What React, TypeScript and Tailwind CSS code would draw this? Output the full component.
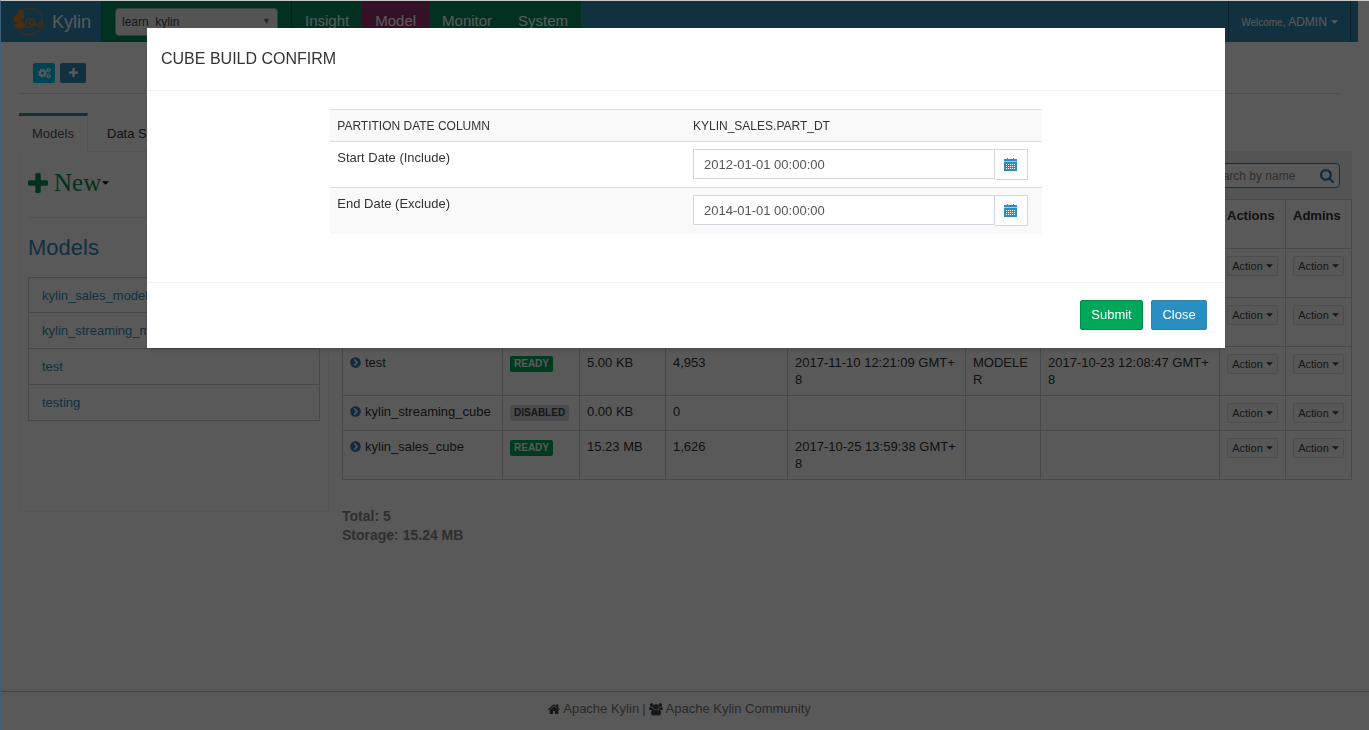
import type { ReactNode } from 'react';
import { FaChevronCircleRight } from 'react-icons/fa';

interface Cube {
  name: string;
  status: 'READY' | 'DISABLED' | '';
  size: string;
  records: string;
  lastBuild: string;
  owner: string;
  created: string;
}

const BLANK: Cube = { name: '', status: '', size: '', records: '', lastBuild: '', owner: '', created: '' };

const CUBES: Cube[] = [
  BLANK,
  BLANK,
  { name: 'test', status: 'READY', size: '5.00 KB', records: '4,953', lastBuild: '2017-11-10 12:21:09 GMT+8', owner: 'MODELER', created: '2017-10-23 12:08:47 GMT+8' },
  { name: 'kylin_streaming_cube', status: 'DISABLED', size: '0.00 KB', records: '0', lastBuild: '', owner: '', created: '' },
  { name: 'kylin_sales_cube', status: 'READY', size: '15.23 MB', records: '1,626', lastBuild: '2017-10-25 13:59:38 GMT+8', owner: '', created: '' },
];

const MODELS = ['kylin_sales_model', 'kylin_streaming_model', 'test', 'testing'];

const NAV = [
  { label: 'Insight', cls: 'bg-[#068c62]' },
  { label: 'Model', cls: 'bg-[#983270]' },
  { label: 'Monitor', cls: 'bg-[#068c62]' },
  { label: 'System', cls: 'bg-[#068c62]' },
];

const Caret = () => (
  <svg className="inline-block h-1 w-[7px] align-middle" viewBox="0 0 8 4" fill="currentColor" aria-hidden="true">
    <path d="M0 0h8L4 4z" />
  </svg>
);

const PlusIcon = ({ className }: { className: string }) => (
  <svg className={className} viewBox="192 128 1408 1408" fill="currentColor" aria-hidden="true">
    <path d="M1600 736v192q0 40-28 68t-68 28h-416v416q0 40-28 68t-68 28h-192q-40 0-68-28t-28-68v-416h-416q-40 0-68-28t-28-68v-192q0-40 28-68t68-28h416v-416q0-40 28-68t68-28h192q40 0 68 28t28 68v416h416q40 0 68 28t28 68z" />
  </svg>
);

const CogsIcon = () => (
  <svg className="h-3 w-[13px]" viewBox="0 0 26 24" fill="none" stroke="currentColor" aria-hidden="true">
    <circle cx="9" cy="12" r="5" strokeWidth="4" />
    <circle cx="9" cy="12" r="8" strokeWidth="2.5" strokeDasharray="3.2 3.08" />
    <circle cx="21" cy="6" r="2.6" strokeWidth="2.2" />
    <circle cx="21" cy="6" r="4.2" strokeWidth="1.6" strokeDasharray="2.2 2.2" />
    <circle cx="21" cy="18" r="2.6" strokeWidth="2.2" />
    <circle cx="21" cy="18" r="4.2" strokeWidth="1.6" strokeDasharray="2.2 2.2" />
  </svg>
);

const SearchIcon = () => (
  <svg className="size-[14px] shrink-0 text-[#337ab7]" viewBox="64 128 1664 1664" fill="currentColor" aria-hidden="true">
    <path d="M1216 832q0-185-131.5-316.5t-316.5-131.5-316.5 131.5-131.5 316.5 131.5 316.5 316.5 131.5 316.5-131.5 131.5-316.5zm512 832q0 52-38 90t-90 38q-54 0-90-38l-343-342q-179 124-399 124-143 0-273.5-55.5t-225-150-150-225-55.5-273.5 55.5-273.5 150-225 225-150 273.5-55.5 273.5 55.5 225 150 150 225 55.5 273.5q0 220-124 399l343 343q37 37 37 90z" />
  </svg>
);

const HomeIcon = () => (
  <svg className="size-3 text-[#444]" viewBox="96 128 1600 1500" fill="currentColor" aria-hidden="true">
    <path d="M1472 992v480q0 26-19 45t-45 19h-384v-384h-256v384h-384q-26 0-45-19t-19-45v-480q0-1 .5-3t.5-3l575-474 575 474q1 2 1 6zm223-69l-62 74q-8 9-21 11h-3q-13 0-21-7l-692-577-692 577q-12 8-24 7-13-2-21-11l-62-74q-8-10-7-23.5t11-21.5l719-599q32-26 76-26t76 26l244 204v-195q0-14 9-23t23-9h192q14 0 23 9t9 23v408l219 182q10 8 11 21.5t-7 23.5z" />
  </svg>
);

const UsersIcon = () => (
  <svg className="h-[13px] w-[14px] text-[#444]" viewBox="0 0 28 26" fill="currentColor" aria-hidden="true">
    <circle cx="5.5" cy="4" r="3.8" />
    <circle cx="22.5" cy="4" r="3.8" />
    <circle cx="14" cy="8" r="5.6" />
    <path d="M0 12q0-4 2-4 4 2 6 1 0 4 2 5H3q-3 0-3-2zM28 12q0-4-2-4-4 2-6 1 0 4-2 5h7q3 0 3-2zM4 21q0-8 5-8 5 3 10 0 5 0 5 8 0 4-4 4H8q-4 0-4-4z" />
  </svg>
);

const CalendarIcon = () => (
  <svg className="size-[13px]" viewBox="0 0 13 13" fill="currentColor" aria-hidden="true">
    <path d="M3 0h1v1h5V0h1v1h3v2H0V1h3z" />
    <path d="M0 3h13v1H0z" opacity=".45" />
    <path d="M0 4h13v9H0z" />
    <path d="M2 6.5h9M2 8.5h9M2 10.5h9" stroke="#fff" strokeWidth="1" strokeDasharray="1 1" />
  </svg>
);

const Logo = () => (
  <svg className="h-8 w-8" viewBox="0 0 32 32" fill="none" stroke="#d9802c" strokeLinecap="round" aria-hidden="true">
    <path d="M9 5C15 0 25 2 28 9c1 2 1 4 1 6" strokeWidth="1" />
    <path d="M5 23c4 7 15 8 21 1" strokeWidth="1" />
    <path d="M5 8l1-2 1-3 2 2 2 2-1 3 1 2-3 1 2 4 2 2-2 2-1 2-2-2-3 2 0-2-3-1 3-2 1-2-2-1-2 1 1-3-1-2z" fill="#d9802c" strokeWidth="1" />
    <path d="M12 21c1-2 0-4 1-6 2-3 7-3 8 0 1 4-4 5-5 2 0-1 1-2 2-1M13 21h4c3 0 4-3 6-3 2 1 3 4 6 2 1-1 1-4-1-4-1 0-2 1-1 2" strokeWidth="1.5" />
  </svg>
);

const TopBar = () => (
  <header className="flex h-[41px] bg-[#338bb8] text-white">
    <a href="#home" className="flex w-[101px] items-center gap-[7px] border-r border-[#265b7c] pl-3 text-lg">
      <Logo />
      Kylin
    </a>
    <div className="flex bg-[#068c62]">
      <div className="flex items-center border-r border-[#04603f] px-[13px]">
        <select aria-label="Project" className="h-7 w-[163px] appearance-none rounded-sm border border-[#aaa] bg-[#f0f0f0] px-[6px] text-xs text-[#444]">
          <option>learn_kylin</option>
        </select>
        <span className="-ml-4 w-2 text-[9px] text-[#777]">▼</span>
        <span className="w-2" />
      </div>
      <nav className="flex text-[15px]">
        {NAV.map((n) => (
          <a key={n.label} href={`#${n.label}`} className={`flex items-center px-[13px] ${n.cls}`}>
            {n.label}
          </a>
        ))}
      </nav>
    </div>
    <button type="button" className="mr-[7px] ml-auto flex w-[123px] items-center justify-center gap-1 border-x border-[#265b7c] text-xs">
      <span>
        <small className="text-[10px]">Welcome,</small> ADMIN
      </span>
      <Caret />
    </button>
  </header>
);

const Sidebar = () => (
  <aside className="h-[360px] w-[310px] shrink-0 border-r border-b border-l border-[#f2f2f2] px-2">
    <button type="button" className="flex h-[66px] w-full items-center border-b border-[#e8e8e8] pb-1 font-['Liberation_Serif',serif] text-[25px] text-[#068c54]">
      <PlusIcon className="mr-[6px] size-5" />
      New
      <span className="ml-px flex text-black"><Caret /></span>
    </button>
    <h3 className="mt-[14px] text-[22px] leading-8 text-[#338bb8]">Models</h3>
    <ul className="mt-[13px] border border-[#cfcfcf]">
      {MODELS.map((m) => (
        <li key={m} className="h-9 border-b border-[#cfcfcf] px-[13px] leading-[35px] first:h-[35px] last:h-[35px] last:border-b-0">
          <a href={`#${m}`} className="text-[#338bb8]">{m}</a>
        </li>
      ))}
    </ul>
  </aside>
);

const StatusLabel = ({ status }: { status: string }) => (
  <span className={`inline-block h-4 rounded-xs px-1 text-[10px] leading-4 font-bold ${status === 'READY' ? 'bg-[#00a65a] text-white' : 'bg-[#d2d6de] text-[#444]'}`}>
    {status}
  </span>
);

const Cell = ({ children }: { children?: ReactNode }) => (
  <td className="border border-[#d2d2d2] p-[7px] align-top break-all">{children}</td>
);

const ActionCell = () => (
  <Cell>
    <button type="button" className="flex h-5 w-[51px] items-center justify-center gap-[3px] rounded-xs border border-[#ddd] bg-[#f8f8f8] text-[11px] text-[#444]">
      Action <Caret />
    </button>
  </Cell>
);

const CubeTable = () => (
  <div className="min-w-0 flex-1">
    <div className="flex h-[47px] items-center justify-end bg-[#ecf0f5] pr-[12px]">
      <label className="flex h-[25px] w-[150px] items-center rounded-sm border border-[#3c8dbc] bg-white pr-[5px] pl-[17px]">
        <input aria-label="Search by name" placeholder="Search by name" className="w-full min-w-0 text-xs outline-none placeholder:text-[#888]" />
        <SearchIcon />
      </label>
    </div>
    <table className="w-full table-fixed border-collapse leading-[17px]">
      <colgroup>
        <col className="w-[160px]" />
        <col className="w-[77px]" />
        <col className="w-[86px]" />
        <col className="w-[122px]" />
        <col />
        <col className="w-[75px]" />
        <col className="w-[179px]" />
        <col className="w-[66px]" />
        <col className="w-[66px]" />
      </colgroup>
      <thead>
        <tr className="h-[49px] text-left align-top">
          <th colSpan={7} className="border border-[#d2d2d2]" />
          <th className="border border-[#d2d2d2] p-[7px]">Actions</th>
          <th className="border border-[#d2d2d2] p-[7px]">Admins</th>
        </tr>
      </thead>
      <tbody>
        {CUBES.map((c, i) => (
          <tr key={i} className={c.status === 'DISABLED' ? 'h-[35px]' : 'h-[49px]'}>
            <Cell>
              {c.name && (
                <span className="flex items-center gap-1">
                  <FaChevronCircleRight className="size-[11px] shrink-0 text-[#337ab7]" />
                  {c.name}
                </span>
              )}
            </Cell>
            <Cell>{c.status && <StatusLabel status={c.status} />}</Cell>
            <Cell>{c.size}</Cell>
            <Cell>{c.records}</Cell>
            <Cell>{c.lastBuild}</Cell>
            <Cell>{c.owner}</Cell>
            <Cell>{c.created}</Cell>
            <ActionCell />
            <ActionCell />
          </tr>
        ))}
      </tbody>
    </table>
    <div className="mt-[27px] text-sm leading-[19px] font-bold text-[#888]">
      <p>Total: 5</p>
      <p>Storage: 15.24 MB</p>
    </div>
  </div>
);

const DateRow = ({ id, label, value, cls }: { id: string; label: string; value: string; cls: string }) => (
  <tr className={`h-[46px] border-t border-[#ddd] align-top ${cls}`}>
    <td className="p-[7px] leading-[17px]"><label htmlFor={id}>{label}</label></td>
    <td className="p-[7px] pr-[14px]">
      <div className="flex items-start">
        <input id={id} defaultValue={value} className="h-[30px] min-w-0 flex-1 border border-[#d2d6de] bg-white px-[10px] text-[#555]" />
        <button type="button" aria-label={`Pick ${label}`} className="flex h-[31px] w-[33px] items-center justify-center border border-l-0 border-[#d2d6de] bg-white text-[#288fc0]">
          <CalendarIcon />
        </button>
      </div>
    </td>
  </tr>
);

const BuildDialog = () => (
  <div className="fixed inset-0 top-px left-px bg-black/65 pt-[27px] pr-36 pl-[146px]">
    <div role="dialog" aria-modal="true" aria-labelledby="build-title" className="bg-white shadow-md">
      <div className="flex h-[63px] items-center border-b border-[#f0f0f0] px-[14px]">
        <h4 id="build-title" className="text-base">CUBE BUILD CONFIRM</h4>
      </div>
      <div className="flex h-[191px] justify-center pt-[18px]">
        <table className="w-[66%] table-fixed self-start border-collapse">
          <tbody>
            <tr className="h-8 border-t border-[#ddd] bg-[#f9f9f9] text-xs">
              <td className="px-[7px]">PARTITION DATE COLUMN</td>
              <td className="px-[7px]">KYLIN_SALES.PART_DT</td>
            </tr>
            <DateRow id="start" label="Start Date (Include)" value="2012-01-01 00:00:00" cls="bg-white" />
            <DateRow id="end" label="End Date (Exclude)" value="2014-01-01 00:00:00" cls="bg-[#f9f9f9]" />
          </tbody>
        </table>
      </div>
      <div className="flex h-[66px] items-center justify-end gap-2 border-t border-[#f0f0f0] px-[18px] pb-[2px] text-white">
        <button type="button" className="h-[30px] w-[63px] rounded-xs border border-[#008d4c] bg-[#00a65a]">Submit</button>
        <button type="button" className="h-[30px] w-14 rounded-xs border border-[#367fa9] bg-[#288fc0]">Close</button>
      </div>
    </div>
  </div>
);

export default function App() {
  return (
    <div className="flex min-h-screen flex-col border-t border-l border-t-[#c8c8c8] border-l-[#3d5f78] bg-white font-['Liberation_Sans',Arial,sans-serif] text-[13px] text-[#333]">
      <div className="mr-[11px]">
        <TopBar />
      </div>
      <div className="mr-[17px] ml-[18px] flex-1">
        <div className="mr-3 flex h-[52px] items-center gap-[5px] border-b border-dotted border-[#c4c4c4] pt-[10px] pl-[14px] text-white">
          <button type="button" aria-label="Settings" className="flex h-5 w-[22px] items-center justify-center rounded-xs bg-[#00c0ef]">
            <CogsIcon />
          </button>
          <button type="button" aria-label="Add project" className="flex h-5 w-[26px] items-center justify-center rounded-xs bg-[#338bb8]">
            <PlusIcon className="size-[9px]" />
          </button>
        </div>
        <div role="tablist" className="mt-[19px] flex h-[39px] border-b border-[#eee]">
          <button type="button" role="tab" aria-selected="true" className="h-[39px] w-[69px] border-t-3 border-r border-t-[#338bb8] border-r-[#eee] bg-white text-[#555]">
            Models
          </button>
          <button type="button" role="tab" aria-selected="false" className="px-[19px] pt-1">Data Source</button>
        </div>
        <div className="flex gap-[13px]">
          <Sidebar />
          <CubeTable />
        </div>
      </div>
      <footer className="flex h-[39px] items-center justify-center gap-[3px] border-t border-[#bbb] pr-[11px] pb-1 text-[#777]">
        <a href="#kylin" className="flex items-center gap-[3px]"><HomeIcon />Apache Kylin</a>
        <span>|</span>
        <a href="#community" className="flex items-center gap-[3px]"><UsersIcon />Apache Kylin Community</a>
      </footer>
      <BuildDialog />
    </div>
  );
}
